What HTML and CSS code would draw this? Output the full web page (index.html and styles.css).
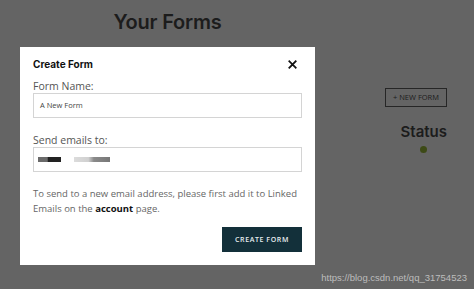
FILE: index.html
```html
<!DOCTYPE html>
<html>
	<head>
		<meta charset="UTF-8">
		<title>Your Forms</title>
		<link rel="stylesheet" href="styles.css">
	</head>
	<body>
		<div class="page">
			<div class="main">
				<h1 class="title">Your Forms</h1>
			</div>
			<div class="side">
				<div class="new-btn">+ NEW FORM</div>
				<div class="status">
					<div class="status-title">Status</div>
					<div class="dot"></div>
				</div>
			</div>
		</div>

		<div class="modal">
			<div class="modal-head">
				<span class="modal-title">Create Form</span>
				<svg class="close" width="9" height="9" viewBox="0 0 10 10">
					<path d="M1.5 1.5 L8.5 8.5 M8.5 1.5 L1.5 8.5" stroke="#111" stroke-width="2" stroke-linecap="square"/>
				</svg>
			</div>
			<label class="label">Form Name:</label>
			<div class="input">A New Form</div>
			<label class="label">Send emails to:</label>
			<div class="input emails">
				<span class="blur dark"></span>
				<span class="blur light"></span>
			</div>
			<p class="note">To send to a new email address, please first add it to Linked Emails on the <b>account</b> page.</p>
			<div class="actions">
				<div class="create-btn">CREATE FORM</div>
			</div>
		</div>

		<div class="mark">https://blog.csdn.net/qq_31754523</div>
	</body>
</html>
```

FILE: styles.css
```css
* {
	margin: 0;
	padding: 0;
	box-sizing: border-box;
}

body {
	width: 474px;
	height: 289px;
	background: #646464;
	font-family: "Open Sans", "Liberation Sans", sans-serif;
	position: relative;
	overflow: hidden;
}

.page {
	display: grid;
	grid-template-columns: 295px 1fr;
	padding: 0 27px 0 20px;
}

.title {
	text-align: center;
	font-family: Inter, "Liberation Sans", sans-serif;
	font-size: 20px;
	font-weight: 600;
	color: #1c1c1c;
	padding-top: 10px;
	letter-spacing: -0.2px;
}

.side {
	display: flex;
	flex-direction: column;
	align-items: flex-end;
	padding-top: 88px;
}

.new-btn {
	border: 1px solid #262626;
	height: 19px;
	width: 62px;
	font-size: 7.5px;
	line-height: 17px;
	text-align: center;
	color: #1c1c1c;
}

.status {
	display: flex;
	flex-direction: column;
	align-items: center;
	margin-top: 15px;
}

.status-title {
	font-family: Inter, "Liberation Sans", sans-serif;
	font-weight: 600;
	font-size: 15px;
	color: #1c1c1c;
}

.dot {
	width: 7px;
	height: 7px;
	border-radius: 50%;
	background: #3d4a16;
	margin-top: 5px;
}

.modal {
	position: absolute;
	left: 20px;
	top: 47px;
	width: 295px;
	height: 218px;
	background: #ffffff;
	padding: 9px 13px 13px 13px;
	display: flex;
	flex-direction: column;
}

.modal-head {
	display: flex;
	justify-content: space-between;
	align-items: center;
	height: 16px;
	padding-right: 5px;
}

.modal-title {
	font-family: Inter, "Liberation Sans", sans-serif;
	font-weight: 700;
	font-size: 10px;
	color: #111;
}

.label {
	display: block;
	font-size: 10.5px;
	line-height: 14px;
	color: #555;
	margin-top: 7px;
}

.input {
	height: 25px;
	border: 1px solid #d4d4d4;
	font-size: 7.5px;
	line-height: 23px;
	padding-left: 6px;
	color: #444;
}

.input + .label {
	margin-top: 15px;
}

.emails {
	display: flex;
	align-items: center;
	gap: 13px;
	padding-left: 4px;
}

.blur {
	display: block;
	height: 5px;
}

.blur.dark {
	width: 23px;
	background: linear-gradient(to right, #6a6a6a 0, #6a6a6a 40%, #222 45%, #222 100%);
}

.blur.light {
	width: 36px;
	background: linear-gradient(to right, #dcdcdc 0, #d0d0d0 40%, #8a8a8a 55%, #777 100%);
}

.note {
	font-size: 9.5px;
	line-height: 15px;
	color: #666;
	margin-top: 14px;
}

.note b {
	color: #111;
	font-weight: 700;
}

.actions {
	display: flex;
	justify-content: flex-end;
	margin-top: auto;
}

.create-btn {
	width: 80px;
	height: 25px;
	background: #13303a;
	color: #e8eef0;
	font-size: 7px;
	line-height: 25px;
	text-align: center;
	letter-spacing: 0.6px;
	font-weight: 600;
}

.mark {
	position: absolute;
	right: 7px;
	bottom: 6px;
	font-family: "Liberation Sans", sans-serif;
	font-size: 9.5px;
	color: #bdbdbd;
}
```
